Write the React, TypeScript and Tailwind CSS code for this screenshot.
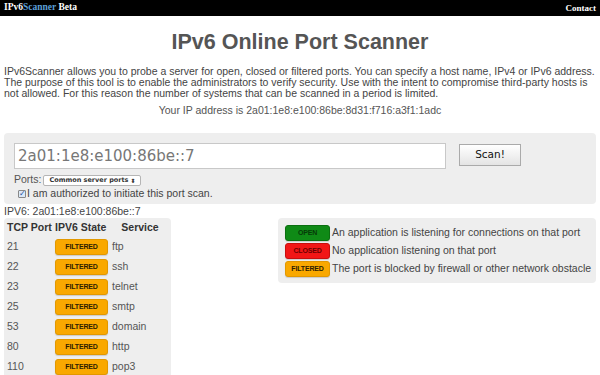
import React from 'react';

const PORTS: [number, string][] = [
  [21, 'ftp'],
  [22, 'ssh'],
  [23, 'telnet'],
  [25, 'smtp'],
  [53, 'domain'],
  [80, 'http'],
  [110, 'pop3'],
];

const BADGE: Record<string, string> = {
  OPEN: 'bg-[#0f8a16] text-[#063a08] border-[#0b6f10]',
  CLOSED: 'bg-[#f21616] text-[#6b0000] border-[#c80e0e]',
  FILTERED: 'bg-[#f9a800] text-[#2e1d00] border-[#e29800]',
};

const Badge = ({ state, className }: { state: string; className: string }) => (
  <span
    className={`flex items-center justify-center rounded-[3px] border font-black text-[7px] tracking-tight shadow-[0_1px_1px_rgba(0,0,0,0.15)] ${BADGE[state]} ${className}`}
  >
    {state}
  </span>
);

export default function App() {
  return (
    <div className="w-[600px] h-[375px] overflow-hidden bg-white text-[#4a4a4a] font-['Liberation_Sans',Arial,sans-serif] whitespace-nowrap">
      {/* top bar */}
      <div className="h-[16px] bg-black flex items-center justify-between px-[4px] font-['Liberation_Serif',serif] font-bold text-[9.5px] text-white leading-none">
        <div>
          IPv6<span className="text-[#5b9fd6]">Scanner</span> Beta
        </div>
        <div className="text-[9px]">Contact</div>
      </div>

      <div className="px-[4px]">
        <h1 className="text-center font-bold text-[21.5px] text-[#555] leading-[28px] mt-[12px]">IPv6 Online Port Scanner</h1>

        <p className="text-[10.5px] leading-[11px] mt-[10px] text-[#444]">
          IPv6Scanner allows you to probe a server for open, closed or filtered ports. You can specify a host name, IPv4 or IPv6 address.
          <br />
          The purpose of this tool is to enable the administrators to verify security. Use with the intent to compromise third-party hosts is
          <br />
          not allowed. For this reason the number of systems that can be scanned in a period is limited.
        </p>

        <p className="text-center text-[10.5px] leading-[14px] mt-[4px] text-[#555]">Your IP address is 2a01:1e8:e100:86be:8d31:f716:a3f1:1adc</p>

        {/* scan form */}
        <div className="mt-[16px] bg-[#eeeeee] rounded-[4px] h-[71px] pt-[10px] pl-[10px]">
          <div className="flex items-start">
            <div className="w-[432px] h-[26px] bg-white border border-[#c8c8c8] flex items-center pl-[3px] font-['DejaVu_Sans',sans-serif] text-[15px] text-[#777]">
              2a01:1e8:e100:86be::7
            </div>
            <button className="ml-[13px] mt-[1px] w-[62px] h-[22px] border border-[#aaa] bg-gradient-to-b from-white to-[#e4e4e4] font-['DejaVu_Sans',sans-serif] text-[10.5px] text-[#111]">
              Scan!
            </button>
          </div>
          <div className="flex items-center h-[15px] mt-[3px] text-[10.5px] text-[#555]">
            <span>Ports:</span>
            <span className="ml-[2px] mt-[2px] h-[11px] w-[98px] border border-[#b5b5b5] rounded-[2px] bg-white flex items-center justify-between px-[5px] font-['DejaVu_Sans',sans-serif] text-[6.5px] font-bold text-[#333]">
              Common server ports <span className="text-[6px]">⬍</span>
            </span>
          </div>
          <div className="flex items-center h-[14px] ml-[4px] text-[10.5px] text-[#444]">
            <span className="w-[8px] h-[8px] border border-[#888] rounded-[1px] bg-[#dbe8f7] flex items-center justify-center text-[8px] text-[#1d4f9a] leading-none">✓</span>
            <span className="ml-[1px]">I am authorized to initiate this port scan.</span>
          </div>
        </div>

        <div className="text-[10.5px] leading-[13px] mt-[1px] text-[#444]">IPV6: 2a01:1e8:e100:86be::7</div>

        <div className="flex items-start">
          {/* results table */}
          <div className="w-[167px] bg-[#eeeeee] rounded-t-[4px] pb-[20px]">
            <div className="flex h-[19px] items-center font-bold text-[10.5px] text-[#333]">
              <span className="w-[51px] pl-[3px]">TCP Port</span>
              <span className="w-[54px]">IPV6 State</span>
              <span className="flex-1 text-center">Service</span>
            </div>
            {PORTS.map(([port, svc]) => (
              <div key={port} className="flex h-[20px] items-center text-[10.5px] text-[#555]">
                <span className="w-[51px] pl-[3px]">{port}</span>
                <Badge state="FILTERED" className="w-[53px] h-[16px]" />
                <span className="ml-[4px]">{svc}</span>
              </div>
            ))}
          </div>

          {/* legend */}
          <div className="ml-auto w-[318px] bg-[#eeeeee] rounded-[4px] pt-[6px] pb-[5px] pl-[7px] text-[10.5px] text-[#444]">
            {[
              ['OPEN', 'An application is listening for connections on that port'],
              ['CLOSED', 'No application listening on that port'],
              ['FILTERED', 'The port is blocked by firewall or other network obstacle'],
            ].map(([s, d]) => (
              <div key={s} className="flex items-center h-[18px]">
                <Badge state={s} className="w-[45px] h-[16px]" />
                <span className="ml-[2px]">{d}</span>
              </div>
            ))}
          </div>
        </div>
      </div>
    </div>
  );
}
